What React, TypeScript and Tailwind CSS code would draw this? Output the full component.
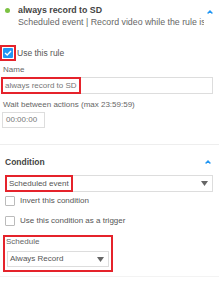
import React from "react";

function ChevronUp({ className }: { className?: string }) {
  return (
    <svg className={className} width="6" height="4" viewBox="0 0 6 4" fill="none">
      <path d="M0.6 3.5 L3 1.1 L5.4 3.5" stroke="#2196f3" strokeWidth="1.4" />
    </svg>
  );
}

function Caret() {
  return (
    <svg width="7" height="5" viewBox="0 0 7 5">
      <path d="M0 0 L7 0 L3.5 5 Z" fill="#666" />
    </svg>
  );
}

export default function App() {
  return (
    <div className="w-[219px] h-[300px] bg-white overflow-hidden font-['Liberation_Sans',Arial,sans-serif] text-[#333]">
      {/* Header */}
      <div className="flex items-start pt-[5px] pl-[5px]">
        <div className="w-[5px] h-[5px] mt-[3px] rounded-full bg-[#7cc242] shrink-0" />
        <div className="ml-[8px] w-[186px] min-w-0">
          <div className="text-[8.8px] font-bold leading-[11px] text-[#444]">always record to SD</div>
          <div className="text-[8.8px] leading-[11px] mt-[1px] text-[#666] whitespace-nowrap overflow-hidden">
            Scheduled event | Record video while the rule is active
          </div>
        </div>
        <ChevronUp className="mt-[5px] ml-[3px]" />
      </div>

      {/* Use this rule */}
      <div className="flex items-center mt-[17px]">
        <div className="w-[16px] h-[16px] border-2 border-[#e5232b] flex items-center justify-center">
          <div className="w-[10px] h-[10px] bg-[#2196f3] rounded-[1px] flex items-center justify-center">
            <svg width="8" height="6" viewBox="0 0 8 6" fill="none">
              <path d="M1 3 L3.2 5 L7 1" stroke="white" strokeWidth="1.4" />
            </svg>
          </div>
        </div>
        <span className="ml-[1px] text-[8.5px] text-[#555]">Use this rule</span>
      </div>

      {/* Name */}
      <div className="px-[2px] mt-[4px]">
        <div className="pl-[1px] text-[8px] leading-[10px] text-[#666]">Name</div>
        <div className="mt-[2px] h-[17px] w-[211px] border border-[#ddd] flex">
          <span className="-ml-[2px] -my-[1px] h-[17px] border-2 border-[#e5232b] px-[2px] flex items-center text-[8px] text-[#777] leading-none">
            always record to SD
          </span>
        </div>
        <div className="pl-[1px] mt-[6px] text-[8px] leading-[10px] text-[#666]">Wait between actions (max 23:59:59)</div>
        <div className="mt-[2px] h-[16px] w-[43px] border border-[#ddd] flex items-center pl-[3px] text-[8px] text-[#777]">
          00:00:00
        </div>
      </div>

      <div className="mt-[16px] h-px bg-[#eee]" />

      {/* Condition */}
      <div className="flex items-center justify-between pl-[5px] pr-[8px] mt-[11px]">
        <span className="text-[8.5px] leading-[12px] font-bold text-[#444]">Condition</span>
        <ChevronUp />
      </div>

      <div className="px-[5px] mt-[7px]">
        <div className="h-[17px] w-[208px] border border-[#ddd] flex items-center justify-between pr-[4px]">
          <span className="-ml-px -my-[1px] h-[17px] border-2 border-[#e5232b] px-[2px] flex items-center text-[8px] text-[#555] leading-none">
            Scheduled event
          </span>
          <Caret />
        </div>

        <div className="flex items-center mt-[4px]">
          <div className="w-[10px] h-[10px] border border-[#bbb] rounded-[1px]" />
          <span className="ml-[5px] text-[8px] leading-[10px] text-[#555]">Invert this condition</span>
        </div>
        <div className="flex items-center mt-[10px]">
          <div className="w-[10px] h-[10px] border border-[#bbb] rounded-[1px]" />
          <span className="ml-[5px] text-[8px] leading-[10px] text-[#555]">Use this condition as a trigger</span>
        </div>
      </div>

      <div className="ml-[3px] mt-[9px] w-[110px] border-2 border-[#e5232b] pb-[3px] pl-[1px]">
        <div className="text-[8px] leading-[10px] text-[#666]">Schedule</div>
        <div className="ml-[1px] mt-[4px] h-[16px] w-[102px] border border-[#ddd] flex items-center justify-between pl-[2px] pr-[4px]">
          <span className="text-[8px] text-[#555]">Always Record</span>
          <Caret />
        </div>
      </div>

      <div className="mt-[4px] h-px bg-[#f3f3f3]" />
    </div>
  );
}
